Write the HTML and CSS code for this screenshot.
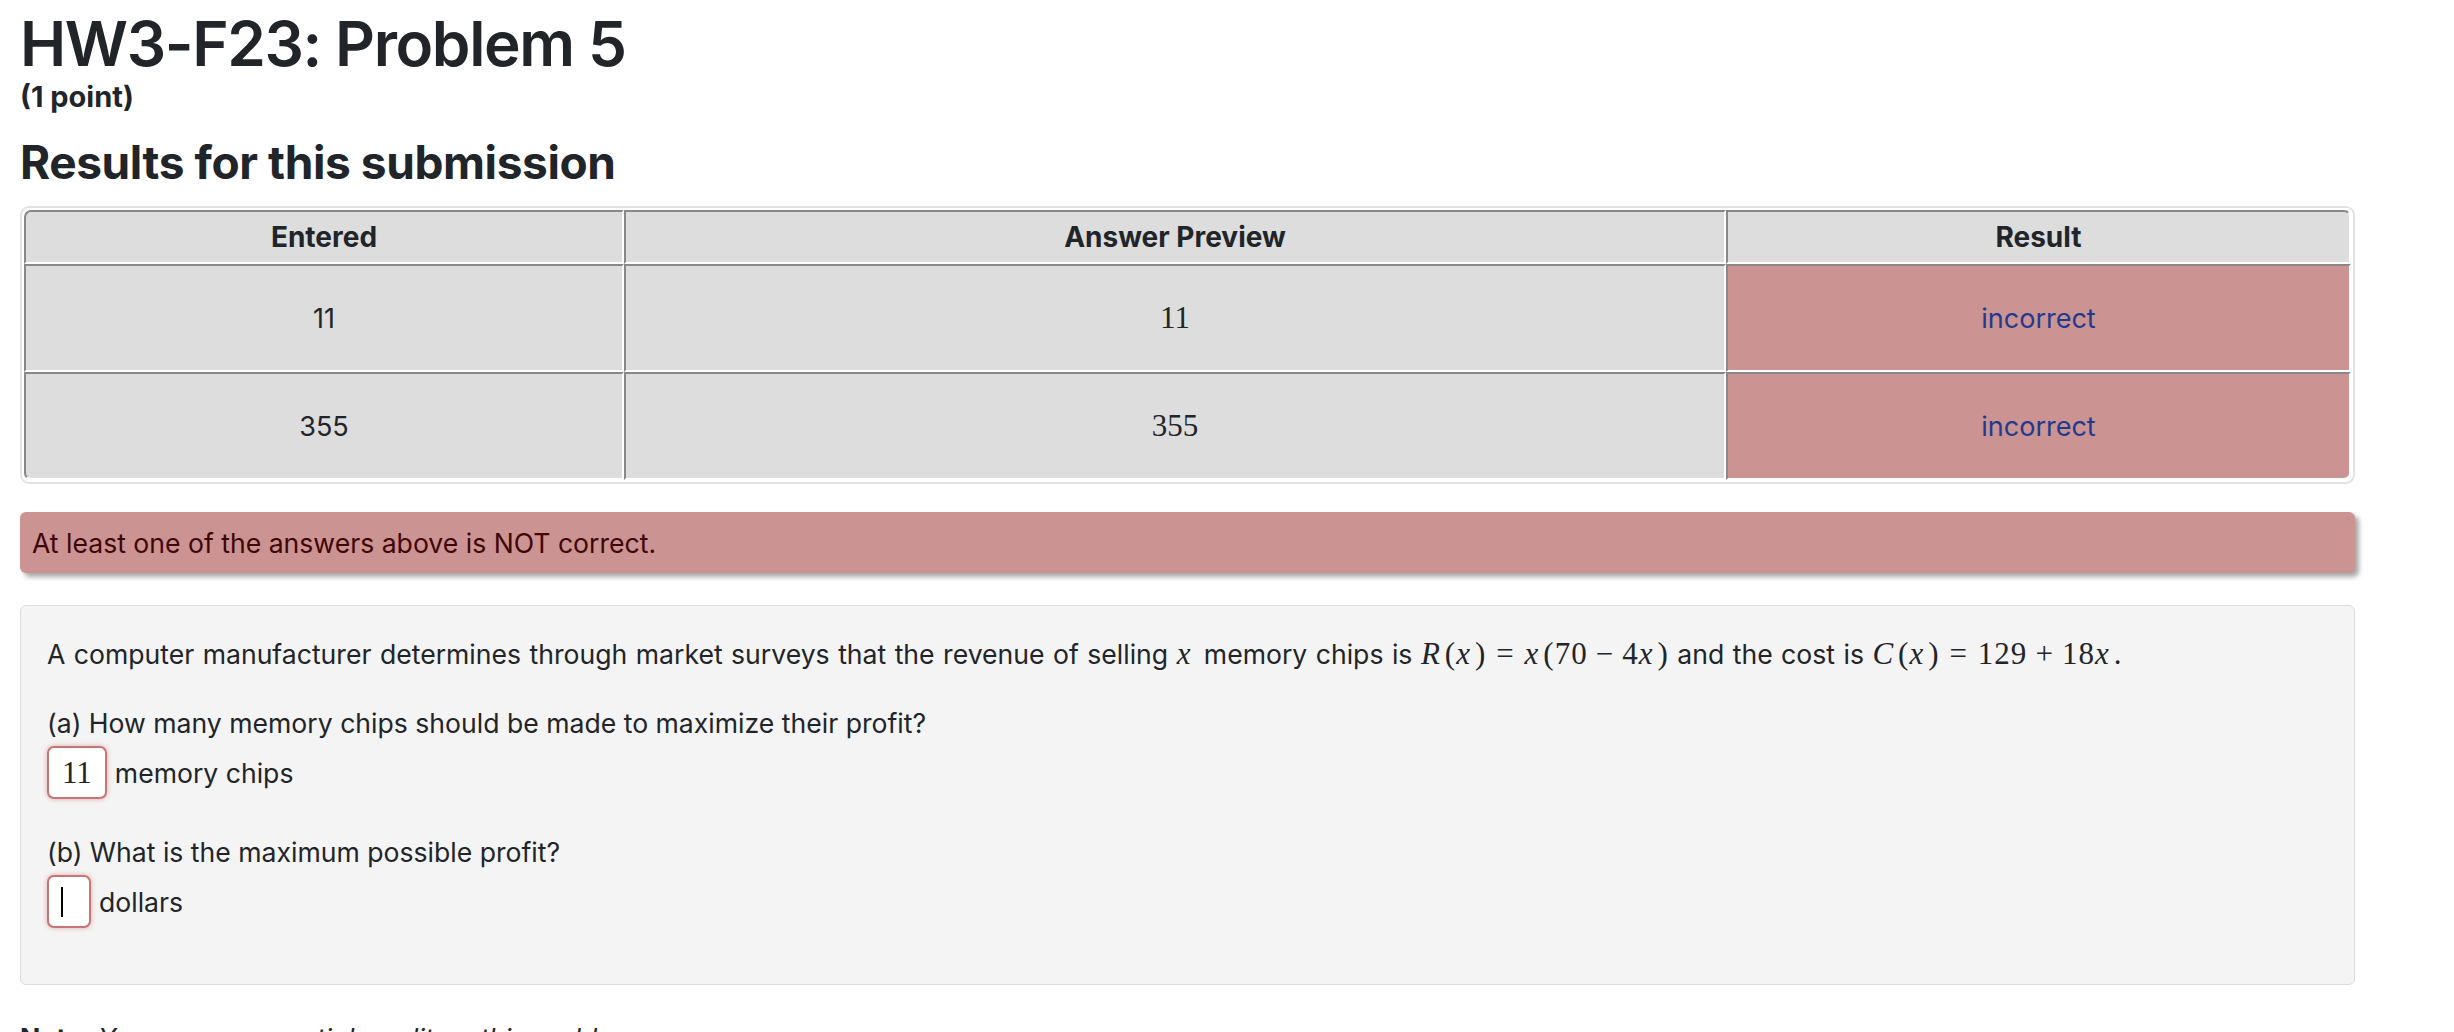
FILE: index.html
```html
<!DOCTYPE html>
<html lang="en">
<head>
    <title>HW3-F23: Problem 5</title>
    <meta charset="UTF-8">
    <meta name="viewport" content="width=device-width, initial-scale=1.0">
    <link rel="stylesheet" href="styles.css">
</head>
<body>
    <main class="page">
        <h1 class="title">HW3-F23: Problem 5</h1>
        <div class="points">(1 point)</div>
        <h2 class="results-title">Results for this submission</h2>

        <div class="results-wrap">
            <table class="results">
                <tr>
                    <th class="col-entered">Entered</th>
                    <th class="col-preview">Answer Preview</th>
                    <th class="col-result">Result</th>
                </tr>
                <tr>
                    <td>11</td>
                    <td class="preview">11</td>
                    <td class="wrong"><a href="#">incorrect</a></td>
                </tr>
                <tr>
                    <td>355</td>
                    <td class="preview">355</td>
                    <td class="wrong"><a href="#">incorrect</a></td>
                </tr>
            </table>
        </div>

        <div class="alert">At least one of the answers above is NOT correct.</div>

        <div class="problem">
            <p class="statement">
                A computer manufacturer determines through market surveys that the revenue of selling
                <span class="math"><i>x</i></span> memory chips is
                <span class="math"><i>R</i>(<i>x</i>)<span class="rel">=</span><i>x</i>(70<span class="bin">&minus;</span>4<i>x</i>)</span>
                and the cost is
                <span class="math"><i>C</i>(<i>x</i>)<span class="rel">=</span>129<span class="bin">+</span>18<i>x</i>.</span>
            </p>

            <p class="part">(a) How many memory chips should be made to maximize their profit?</p>
            <div class="answer-row">
                <span class="ans-box">11</span>
                <span>memory chips</span>
            </div>

            <p class="part part-b">(b) What is the maximum possible profit?</p>
            <div class="answer-row">
                <span class="ans-box empty"><span class="caret"></span></span>
                <span>dollars</span>
            </div>
        </div>

        <p class="note"><b>Note:</b> <i>You can earn partial credit on this problem.</i></p>
    </main>
</body>
</html>
```

FILE: styles.css
```css
body {
    margin: 0;
    padding: 0;
    background-color: #fff;
    color: #212529;
    font-family: Inter, "Noto Sans", sans-serif;
    font-size: 26.6px;
}
.page {
    width: 2335px;
    margin-left: 20px;
}
.title {
    margin: 7px 0 0 0;
    font-size: 62px;
    font-weight: 600;
    line-height: 74px;
    letter-spacing: -1.4px;
}
.points {
    font-size: 29px;
    font-weight: bold;
    line-height: 32px;
}
.results-title {
    margin: 24px 0 0 0;
    font-size: 46px;
    font-weight: bold;
    line-height: 50px;
    letter-spacing: -0.4px;
}

/* tabela sa rezultatima */
.results-wrap {
    margin-top: 19px;
    border: 2px solid #e2e2e2;
    border-radius: 9px;
    padding: 2px;
}
.results {
    width: 100%;
    border-collapse: separate;
    border-spacing: 0;
    table-layout: fixed;
}
.results th, .results td {
    background-color: #ddd;
    border-top: 2px solid #888;
    border-left: 2px solid #888;
    border-right: 2px solid #fff;
    border-bottom: 2px solid #fff;
    text-align: center;
    padding: 0;
}
.results th {
    height: 50px;
    font-size: 28px;
    font-weight: bold;
}
.results td {
    height: 104px;
    font-size: 27px;
}
.results tr:first-child th:first-child {
    border-top-left-radius: 7px;
}
.results tr:first-child th:last-child {
    border-top-right-radius: 7px;
}
.results tr:last-child td:last-child {
    border-bottom-right-radius: 7px;
}
.results tr:last-child td:first-child {
    border-bottom-left-radius: 7px;
}
.col-entered {
    width: 596px;
}
.col-preview {
    width: 1098px;
}
.results td.preview {
    font-family: "Liberation Serif", serif;
    font-size: 31px;
}
.results td.wrong {
    background-color: #cc9393;
}
.results td.wrong a {
    color: #1f3a8f;
    text-decoration: none;
}

.alert {
    margin-top: 28px;
    height: 61px;
    display: flex;
    align-items: center;
    padding: 0 12px;
    background-color: #cc9393;
    color: #3f0606;
    border-radius: 6px;
    box-shadow: 4px 4px 5px rgba(0, 0, 0, 0.35);
}

/* zadatak */
.problem {
    margin-top: 32px;
    padding: 28px 26px 56px 26px;
    background-color: #f4f4f4;
    border: 1px solid #dcdcdc;
    border-radius: 6px;
    line-height: 40px;
}
.problem p {
    margin: 0;
}
.statement {
    word-spacing: 1px;
}
.math {
    font-family: "Liberation Serif", serif;
    font-size: 31px;
    letter-spacing: 1px;
    word-spacing: 0;
}
.math i {
    margin-right: 4px;
}
.math .rel {
    margin: 0 0.32em;
}
.math .bin {
    margin: 0 0.26em;
}
.part {
    margin-top: 29px !important;
}
.part-b {
    margin-top: 33px !important;
}
.answer-row {
    display: flex;
    align-items: center;
    gap: 8px;
    margin-top: 3px;
}
.ans-box {
    box-sizing: border-box;
    height: 53px;
    min-width: 44px;
    padding: 0 13px;
    display: flex;
    align-items: center;
    background-color: #fff;
    border: 2px solid #c97474;
    border-radius: 7px;
    box-shadow: 0 0 5px rgba(200, 80, 80, 0.45);
    font-family: "Liberation Serif", serif;
    font-size: 31px;
}
.ans-box.empty {
    width: 44px;
    padding: 0 0 0 12px;
}
.caret {
    display: block;
    width: 2px;
    height: 30px;
    background-color: #000;
}
.note {
    margin: 33px 0 0 0;
    line-height: 40px;
}
```
